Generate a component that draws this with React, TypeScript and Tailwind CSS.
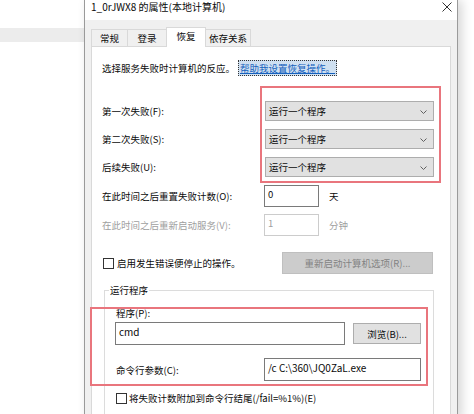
import React from 'react';

const Dropdown: React.FC<{ value: string }> = ({ value }) => (
  <div className="ml-[1px] flex h-[20px] w-[169px] items-center justify-between border border-[#adadad] bg-[#e1e1e1] pl-[3px] pr-[6px]">
    <span>{value}</span>
    <svg width="7" height="4" viewBox="0 0 7 4" className="mt-[1px]">
      <polyline points="0.5,0.5 3.5,3.5 6.5,0.5" fill="none" stroke="#606060" strokeWidth="1" />
    </svg>
  </div>
);

const TextBox: React.FC<{ value: string; width: string; disabled?: boolean }> = ({ value, width, disabled }) => (
  <div
    className={
      width +
      ' h-[22px] border bg-white pl-[3px] pt-[1px] leading-[14px] ' +
      (disabled ? 'border-[#cccccc] text-[#a0a0a0]' : 'border-[#7a7a7a]')
    }
  >
    {value}
  </div>
);

const CheckBox = () => <div className="h-[11px] w-[11px] shrink-0 border border-[#333333] bg-white" />;

export default function App() {
  const failures = ['第一次失败(F):', '第二次失败(S):', '后续失败(U):'];

  return (
    <div className="relative flex h-[414px] w-[474px] overflow-hidden bg-white font-['Noto_Sans_CJK_SC',sans-serif] text-[9.5px] leading-[14px] text-[#0a0a0a]">
      {/* background app */}
      <div className="w-[84px] shrink-0">
        <div className="mt-[28px] h-[14px] bg-[#ececec]" />
      </div>

      {/* properties window */}
      <div className="h-[420px] w-[374px] shrink-0 border-x border-[#9a9a9a] bg-[#f0f0f0] shadow-[4px_0_10px_rgba(0,0,0,0.16)]">
        <div className="flex h-[20px] items-start justify-between bg-white pl-[6px] pr-[5px]">
          <span className="text-[10px] leading-[14px]">1_0rJWX8 的属性(本地计算机)</span>
          <svg width="10" height="10" viewBox="0 0 10 10" className="mt-[2px]">
            <path d="M0.5 0.5 L9.5 9.5 M9.5 0.5 L0.5 9.5" stroke="#333" strokeWidth="1" />
          </svg>
        </div>

        <div className="pl-[6px]">
          <div className="mt-[7px] flex h-[20px] items-end">
            <div className="mb-[1px] flex h-[17px] w-[36px] items-center justify-center border-l border-t border-[#d9d9d9]">常规</div>
            <div className="mb-[1px] flex h-[17px] w-[39px] items-center justify-center border-l border-t border-[#d9d9d9]">登录</div>
            <div className="relative z-10 flex h-[20px] w-[40px] items-start justify-center border-x border-t border-[#d9d9d9] bg-white pt-[1px]">恢复</div>
            <div className="mb-[1px] flex h-[17px] w-[45px] items-center justify-center border-r border-t border-[#d9d9d9]">依存关系</div>
          </div>

          <div className="-mt-[1px] h-[400px] w-[360px] border border-[#d9d9d9] bg-white pl-[10px]">
            <div className="mt-[13px] flex items-center">
              <span>选择服务失败时计算机的反应。</span>
              <span className="ml-[3px] border border-dotted border-[#333] bg-[#cfe0f1] px-[1px] text-[#1560bd] underline">帮助我设置恢复操作。</span>
            </div>

            <div className="mt-[25px] flex flex-col gap-[8px]">
              {failures.map(label => (
                <div key={label} className="flex h-[20px] items-center">
                  <span className="w-[162px]">{label}</span>
                  <Dropdown value="运行一个程序" />
                </div>
              ))}
            </div>

            <div className="mt-[8px] flex items-center">
              <span className="w-[162px]">在此时间之后重置失败计数(O):</span>
              <TextBox value="0" width="w-[55px]" />
              <span className="ml-[10px]">天</span>
            </div>

            <div className="mt-[7px] flex items-center text-[#a0a0a0]">
              <span className="w-[162px]">在此时间之后重新启动服务(V):</span>
              <TextBox value="1" width="w-[55px]" disabled />
              <span className="ml-[10px]">分钟</span>
            </div>

            <div className="mt-[16px] flex items-center">
              <div className="flex w-[180px] items-center gap-[3px] pl-[1px]">
                <CheckBox />
                <span>启用发生错误便停止的操作。</span>
              </div>
              <div className="flex h-[22px] w-[151px] items-center justify-center border border-[#bfbfbf] bg-[#cccccc] text-[#838383]">
                重新启动计算机选项(R)...
              </div>
            </div>

            <fieldset className="ml-[2px] mt-[9px] w-[330px] border border-[#dcdcdc] pb-[20px] pl-[10px]">
              <legend className="ml-[-6px] px-[1px]">运行程序</legend>
              <div className="mt-[9px] pl-[1px]">程序(P):</div>
              <div className="mt-[2px] flex items-center">
                <div className="h-[23px] w-[230px] border border-[#7a7a7a] bg-white pl-[3px] pt-[2px] text-[10px]">cmd</div>
                <div className="ml-[8px] flex h-[21px] w-[68px] items-center justify-center border border-[#adadad] bg-[#e1e1e1]">浏览(B)...</div>
              </div>
              <div className="mt-[13px] flex items-center">
                <span className="w-[149px] pl-[1px]">命令行参数(C):</span>
                <div className="h-[23px] w-[157px] border border-[#7a7a7a] bg-white pl-[3px] pt-[2px] text-[10px]">/c C:\360\JQ0ZaL.exe</div>
              </div>
              <div className="mt-[10px] flex items-center gap-[2px] pl-[1px]">
                <CheckBox />
                <span>将失败计数附加到命令行结尾(/fail=%1%)(E)</span>
              </div>
            </fieldset>
          </div>
        </div>
      </div>

      {/* red annotation boxes */}
      <div className="pointer-events-none absolute left-[260px] top-[86px] h-[97px] w-[181px] border-2 border-[#e9757d]" />
      <div className="pointer-events-none absolute left-[90px] top-[307px] h-[79px] w-[338px] border-2 border-[#e9757d]" />
    </div>
  );
}
